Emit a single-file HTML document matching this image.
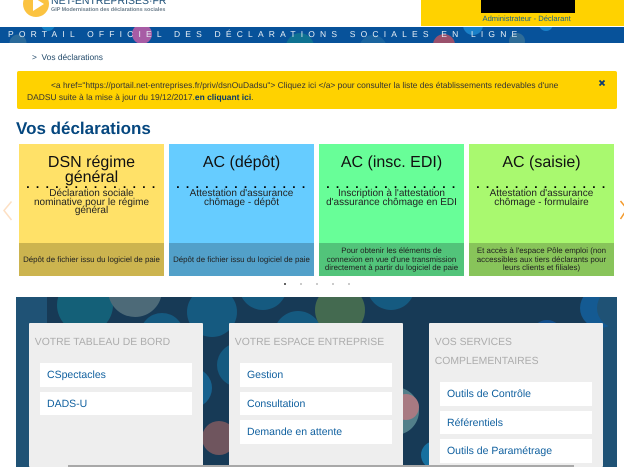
<!DOCTYPE html>
<html lang="fr">
<head>
<meta charset="utf-8">
<style>
html,body{margin:0;padding:0}
body{width:624px;height:467px;position:relative;overflow:hidden;background:#fff;font-family:"Liberation Sans",sans-serif;color:#222;text-rendering:geometricPrecision}
.a{position:absolute;white-space:nowrap}
.card{position:absolute;top:144px;width:145px;height:132px;overflow:hidden;text-align:center;color:#111}
.card .t{position:absolute;left:0;right:0;top:12px;font-size:16px;line-height:14.5px}
.card .d{position:absolute;left:0;right:0;top:36px;font-size:12px;letter-spacing:1.5px;line-height:8px;font-weight:bold;color:#000;white-space:nowrap}
.card .s{position:absolute;left:2px;right:2px;top:46px;font-size:10px;line-height:8.6px;color:#222}
.card .f{position:absolute;left:0;right:0;top:99px;height:33px;padding-top:1px;box-sizing:border-box;font-size:7.9px;line-height:8.5px;display:flex;align-items:center;justify-content:center;color:#222;white-space:nowrap}
.box{position:absolute;top:323px;width:173.5px;height:144px;background:#eee;border-radius:1px}
.h{position:absolute;left:5.5px;font-size:10.4px;color:#adadad;white-space:nowrap;line-height:19px}
.i{position:absolute;left:10.7px;width:152px;height:23.5px;background:#fff;color:#10609f;font-size:10.5px;line-height:25px;padding-left:7px;box-sizing:border-box;white-space:nowrap;overflow:hidden}
.dot{position:absolute;top:283px;width:2px;height:2px;border-radius:50%;background:#bbb}
</style>
</head>
<body>
<!-- logo -->
<svg class="a" style="left:0;top:0" width="200" height="24">
<circle cx="36" cy="4" r="13" fill="#fbc341"/>
<path d="M33 -3 L44 4 L33 11 Z" fill="#fff"/>
</svg>
<div class="a" style="left:51px;top:-5px;font-size:10.5px;line-height:12px;color:#1d4f77">NET-ENTREPRISES·FR</div>
<div class="a" style="left:51px;top:6px;font-size:5.4px;line-height:8px;font-weight:bold;color:#6b7d8b">GIP Modernisation des déclarations sociales</div>

<!-- user box -->
<div class="a" style="left:421px;top:0;width:203px;height:26px;background:#ffd200"></div>
<div class="a" style="left:481px;top:0;width:94px;height:13px;background:#000"></div>
<div class="a" style="left:482.500px;top:13.500px;font-size:7.6px;line-height:10px;color:#176090">Administrateur - Déclarant</div>

<!-- banner -->
<div class="a" style="left:0;top:27px;width:624px;height:16px;overflow:hidden;background:#07529a">
<svg width="624" height="16" style="position:absolute;left:0;top:0">
<circle cx="48" cy="-3" r="7" fill="#1480c4"/>
<circle cx="18" cy="16" r="8.500" fill="#2a6a9a"/>
<circle cx="142" cy="7" r="10" fill="#a75ca5"/>
<circle cx="300" cy="20" r="14" fill="#12808f" opacity=".7"/>
<circle cx="353" cy="-8" r="8" fill="#b06070"/>
<circle cx="373" cy="22" r="14" fill="#1a649f"/>
<circle cx="444" cy="18" r="11" fill="#99506c"/>
<circle cx="473" cy="-2" r="10" fill="#1a80c8"/>
<circle cx="546" cy="-3" r="7" fill="#1a80c8"/>
<circle cx="517" cy="14" r="8" fill="#2f6c97"/>
</svg>
<div class="a" style="left:8px;top:1px;font-size:8.5px;line-height:12px;letter-spacing:5.18px;color:#e6eef5">PORTAIL OFFICIEL DES DÉCLARATIONS SOCIALES EN LIGNE</div>
</div>

<!-- breadcrumb -->
<div class="a" style="left:32px;top:52px;font-size:8.4px;line-height:11px;color:#234a6a">&gt;&nbsp; Vos déclarations</div>

<!-- alert -->
<div class="a" style="left:16.500px;top:71px;width:600px;height:38px;background:#ffd200;border-radius:2px"></div>
<div class="a" style="left:51px;top:78.500px;font-size:8.45px;line-height:12px;color:#333">&lt;a href="https://portail.net-entreprises.fr/priv/dsnOuDadsu"&gt; Cliquez ici &lt;/a&gt; pour consulter la liste des établissements redevables d'une</div>
<div class="a" style="left:27px;top:91px;font-size:8.45px;line-height:12px;color:#333">DADSU suite à la mise à jour du 19/12/2017.<b style="color:#0a3a66">en cliquant ici</b>.</div>
<svg class="a" style="left:598px;top:79px" width="8" height="8"><path d="M1.500 1.500 L6.500 6.500 M6.500 1.500 L1.500 6.500" stroke="#0a3a72" stroke-width="1.800" fill="none"/></svg>

<!-- title -->
<div class="a" style="left:16px;top:119px;font-size:17px;line-height:20px;font-weight:bold;color:#05477f">Vos déclarations</div>

<!-- carousel -->
<div class="card" style="left:19px;background:#ffe168">
<div class="t">DSN régime<br>général</div><div class="d">. . . . . . . . . . . . . .</div>
<div class="s">Déclaration sociale<br>nominative pour le régime<br>général</div>
<div class="f" style="background:#ccb44f">Dépôt de fichier issu du logiciel de paie</div>
</div>
<div class="card" style="left:169px;background:#66ccff">
<div class="t">AC (dépôt)</div><div class="d">. . . . . . . . . . . . . .</div>
<div class="s">Attestation d'assurance<br>chômage - dépôt</div>
<div class="f" style="background:#52a0c9">Dépôt de fichier issu du logiciel de paie</div>
</div>
<div class="card" style="left:319px;background:#68fe98">
<div class="t">AC (insc. EDI)</div><div class="d">. . . . . . . . . . . . . .</div>
<div class="s">Inscription à l'attestation<br>d'assurance chômage en EDI</div>
<div class="f" style="background:#52c47a"><span>Pour obtenir les éléments de<br>connexion en vue d'une transmission<br>directement à partir du logiciel de paie</span></div>
</div>
<div class="card" style="left:469px;background:#a9f96f">
<div class="t">AC (saisie)</div><div class="d">. . . . . . . . . . . . . .</div>
<div class="s">Attestation d'assurance<br>chômage - formulaire</div>
<div class="f" style="background:#88c45a"><span>Et accès à l'espace Pôle emploi (non<br>accessibles aux tiers déclarants pour<br>leurs clients et filiales)</span></div>
</div>
<svg class="a" style="left:0;top:195px" width="24" height="30"><path d="M11.500 6.500 L4 15.500 L11.500 25" fill="none" stroke="#fde0c4" stroke-width="1.500"/></svg>
<svg class="a" style="left:600px;top:195px" width="24" height="30"><path d="M20.500 6 L27 14 L20.500 24" fill="none" stroke="#f39a2c" stroke-width="1.500"/></svg>
<div class="dot" style="left:283.500px;background:#333"></div>
<div class="dot" style="left:299.500px"></div>
<div class="dot" style="left:315.500px"></div>
<div class="dot" style="left:331.500px"></div>
<div class="dot" style="left:347.500px"></div>

<!-- panel -->
<svg class="a" style="left:16px;top:297px" width="601" height="170">
<rect width="601" height="170" fill="#173a56"/>
<rect width="31" height="170" fill="#1f5275"/>
<rect x="579" width="22" height="170" fill="#1f5275"/>
<circle cx="69" cy="8" r="28" fill="#146078"/>
<circle cx="119" cy="-7" r="27" fill="#4d6a78"/>
<circle cx="146" cy="38" r="22" fill="#155a80"/>
<circle cx="196" cy="15" r="25" fill="#155a80"/>
<circle cx="247" cy="-11" r="24" fill="#155a80"/>
<circle cx="282" cy="38" r="24" fill="#155a80"/>
<circle cx="223" cy="68" r="22" fill="#155a80"/>
<circle cx="176" cy="91" r="20" fill="#17628f"/>
<circle cx="203" cy="141" r="17" fill="#6f555e"/>
<circle cx="324" cy="13" r="25" fill="#446a50"/>
<circle cx="375" cy="-11" r="24" fill="#155a80"/>
<circle cx="379" cy="114" r="24" fill="#527f8a"/>
<circle cx="390" cy="110" r="13" fill="#a87a82"/>
<circle cx="419" cy="158" r="14" fill="#17709f"/>
<circle cx="531" cy="39" r="16" fill="#134f8c"/>
<circle cx="584" cy="11" r="20" fill="#145a92"/>
<circle cx="601" cy="11" r="20" fill="#1f5275"/>
</svg>

<div class="box" style="left:29.300px">
<div class="h" style="top:9.500px">VOTRE TABLEAU DE BORD</div>
<div class="i" style="top:40px">CSpectacles</div>
<div class="i" style="top:68.500px">DADS-U</div>
</div>
<div class="box" style="left:229.300px">
<div class="h" style="top:9.500px">VOTRE ESPACE ENTREPRISE</div>
<div class="i" style="top:40px">Gestion</div>
<div class="i" style="top:68.500px">Consultation</div>
<div class="i" style="top:97px">Demande en attente</div>
</div>
<div class="box" style="left:429.300px">
<div class="h" style="top:9.500px">VOS SERVICES<br>COMPLEMENTAIRES</div>
<div class="i" style="top:59px">Outils de Contrôle</div>
<div class="i" style="top:87.500px">Référentiels</div>
<div class="i" style="top:116px">Outils de Paramétrage</div>
</div>
<div class="a" style="left:68px;top:465px;width:506px;height:2px;background:#a8a8a8"></div>
</body>
</html>
